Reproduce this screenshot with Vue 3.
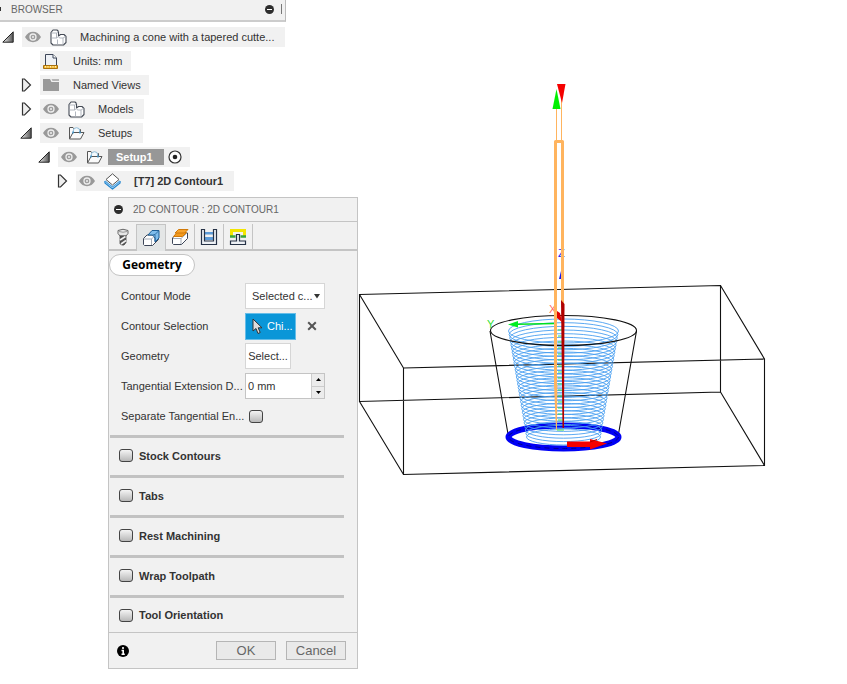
<script setup>
import { computed, ref } from 'vue'

const nodes = [
  { label: 'Machining a cone with a tapered cutte...', level: 0, arrow: 'open', eye: true, icon: 'body', wide: true },
  { label: 'Units: mm', level: 1, arrow: 'none', eye: false, icon: 'units' },
  { label: 'Named Views', level: 1, arrow: 'closed', eye: false, icon: 'folder' },
  { label: 'Models', level: 1, arrow: 'closed', eye: true, icon: 'body' },
  { label: 'Setups', level: 1, arrow: 'open', eye: true, icon: 'setup' },
  { label: 'Setup1', level: 2, arrow: 'open', eye: true, icon: 'setup', selected: true },
  { label: '[T7] 2D Contour1', level: 3, arrow: 'closed', eye: true, icon: 'contour', bold: true }
]

const tabs = ['Tool', 'Geometry', 'Heights', 'Passes', 'Linking']
const activeTab = ref('Geometry')

const sections = ['Stock Contours', 'Tabs', 'Rest Machining', 'Wrap Toolpath', 'Tool Orientation']
const extension = ref('0 mm')

const turns = computed(() => {
  const count = 31
  return Array.from({ length: count }, (_, i) => {
    const t = i / (count - 1)
    return { cy: 331 + 106 * t, rx: 55 - 18 * t, ry: 12 - 4 * t }
  })
})
</script>

<template>
  <main class="workspace">
    <aside class="side">
      <header class="browser-head">
        <span class="nub"></span>
        <h1>BROWSER</h1>
        <button class="minus" aria-label="Collapse browser"></button>
        <span class="grip"></span>
      </header>

      <ul class="tree">
        <li v-for="n in nodes" :key="n.label" :class="['node', 'level-' + n.level]">
          <span class="arrow">
            <svg v-if="n.arrow === 'open'" width="12" height="12" viewBox="0 0 12 12">
              <defs>
                <linearGradient id="wedge"><stop offset="0" stop-color="#eee" /><stop offset="1" stop-color="#555" /></linearGradient>
              </defs>
              <path d="M0.8 11.2H11.2V0.8Z" fill="url(#wedge)" stroke="#222" />
            </svg>
            <svg v-else-if="n.arrow === 'closed'" width="12" height="14" viewBox="0 0 12 14">
              <path d="M2.500 1V13H4.500L10.500 7L4.500 1Z" fill="#eee" stroke="#333" stroke-width="1.2" />
            </svg>
          </span>
          <div :class="['entry', { wide: n.wide, roomy: n.level > 0 && n.eye && !n.selected }]">
            <svg v-if="n.eye" class="eye" width="16" height="12" viewBox="0 0 16 12">
              <path d="M0 6Q3 0.8 8 0.8T16 6Q13 11.2 8 11.2T0 6Z" fill="#999" />
              <circle cx="8" cy="6" r="3" fill="none" stroke="#eee" stroke-width="1.3" />
              <circle cx="8" cy="6" r="1.2" fill="#ddd" />
            </svg>
            <svg class="icon" width="17" height="17" viewBox="0 0 17 17">
              <g v-if="n.icon === 'body'" stroke-linejoin="round">
                <path d="M1 3.500L3 1H7L8.500 2.500V7L10.500 5.500H14L16 7.500V13.500L13.500 16H3L1 14Z" fill="#fff" stroke="#444a55" stroke-width="1.100" />
                <path d="M1.500 9H6.500M6.500 4V9L8.500 7.500M7.500 10.500V15.500M1.500 4H6.500L8.500 2.500M8.500 7.500L9.500 9H13L15.500 7.500M13 9V15.500" fill="none" stroke="#a9afb8" stroke-width=".9" />
              </g>
              <g v-else-if="n.icon === 'units'">
                <path d="M2.500 13V1.500H10L13.500 5V13" fill="#eef1f6" stroke="#3d4658" />
                <path d="M10 1.500V5H13.500" fill="#fff" stroke="#3d4658" />
                <path d="M.500 12.500H14.500V15.500H.500Z" fill="#f2b632" stroke="#a8700d" />
                <path d="M2.500 13V14.500M5 13V14.500M7.500 13V14.500M10 13V14.500M12.500 13V14.500" stroke="#fff1b8" />
              </g>
              <g v-else-if="n.icon === 'folder'" fill="#999">
                <path d="M0 2H7L8.500 5H16V14H0Z" />
                <path d="M8.500 2H16V4H9.500Z" fill="#b5b5b5" />
              </g>
              <g v-else-if="n.icon === 'setup'" fill="none" stroke="#555" stroke-linejoin="round">
                <path d="M1.500 14V2.500H5L6.500 4.500H12.500V7.500" fill="#fafafa" />
                <circle cx="8.500" cy="6" r="3.300" fill="#f4f9fc" stroke="#8fbcd8" />
                <path d="M1.500 14L5 7.500H16L12.500 14Z" fill="#fafafa" />
                <path d="M5 6.500V8.500M12 6.500V8.500" stroke="#3f94cb" stroke-width="1.500" />
              </g>
              <g v-else fill="none" stroke-linejoin="round">
                <path d="M1 8V10L8.500 16L16 10V8" fill="#fff" stroke="#2486cf" stroke-width="1.300" />
                <path d="M1 8L8.500 14L16 8" stroke="#4fa3e0" stroke-width="1.300" />
                <path d="M2 6.500L8.500 .800L15 6.500L8.500 12Z" fill="#fff" stroke="#555" />
              </g>
            </svg>
            <span :class="['label', { selected: n.selected, bold: n.bold }]">{{ n.label }}</span>
            <svg v-if="n.selected" width="14" height="14" viewBox="0 0 14 14">
              <circle cx="7" cy="7" r="6" fill="#fff" stroke="#333" stroke-width="1.2" />
              <circle cx="7" cy="7" r="2.3" fill="#222" />
            </svg>
          </div>
        </li>
      </ul>

      <section class="panel">
        <header class="panel-head">
          <button class="minus" aria-label="Collapse panel"></button>
          <h2>2D CONTOUR : 2D CONTOUR1</h2>
        </header>

        <nav class="tabs">
          <button v-for="t in tabs" :key="t" :class="['tab', { active: t === activeTab }]" :aria-label="t" @click="activeTab = t">
            <svg width="18" height="18" viewBox="0 0 18 18">
              <g v-if="t === 'Tool'" stroke-linejoin="round">
                <path d="M4 2.500Q9 0 14 2.500V5.500L12 8H6L4 5.500Z" fill="#e6e6e6" stroke="#666" />
                <path d="M5 3.500Q9 5 13 3.500" fill="none" stroke="#999" />
                <path d="M6 8H12V14.500L10 17H7.500L6 15.500Z" fill="#555" stroke="#444" stroke-width=".8" />
                <path d="M6 12L11.500 8.500M7 16L12 12.500" stroke="#f0f0f0" stroke-width="1.600" />
              </g>
              <g v-else-if="t === 'Geometry'" stroke-linejoin="round">
                <path d="M1.500 9.500L5 6H11L16.500 3V10.500L10.500 16.500H2.500L1.500 15.500Z" fill="#fff" stroke="#3d4658" />
                <path d="M6 6L10 1.500H17V9L13 13V9L10.500 6Z" fill="#7fbdec" stroke="#1c5e96" />
                <path d="M10.500 6L13 5.500L16.500 2M13 5.500V12" fill="none" stroke="#1c5e96" stroke-width=".8" />
                <path d="M2 10H9.500V16M9.500 10L12 7.500" fill="none" stroke="#a5acb6" />
              </g>
              <g v-else-if="t === 'Heights'" stroke-linejoin="round">
                <path d="M1.500 10L5 6.500L16.500 5V10.500L10.500 16.500H2.500L1.500 15.500Z" fill="#fff" stroke="#3d4658" />
                <path d="M2 10.500H10V16M10 10.500L16 5" fill="none" stroke="#a5acb6" />
                <path d="M2.500 8.500L6 4.500H15.500L11.500 8.500Z" fill="#f39a1e" stroke="#d07908" />
                <path d="M4 5L7.500 1.500H17L13.500 5Z" fill="#f7a42e" stroke="#d07908" />
              </g>
              <g v-else-if="t === 'Passes'">
                <path d="M4.500 4H13.500V6.500H4.500ZM4.500 9H13.500V12H4.500Z" fill="#5c9bd8" />
                <path d="M1.500 1.500H4.500V13H13.500V1.500H16.500V16.500H1.500Z" fill="#eef1f5" stroke="#263246" stroke-width="1.2" />
              </g>
              <g v-else>
                <path d="M2.500 8V2.500H15.500V8" fill="none" stroke="#f3e500" stroke-width="3" />
                <path d="M1 8.500H6.500M11.500 8.500H17" stroke="#38a33d" stroke-width="2.5" />
                <path d="M7.500 6.500H10.500V13H16.500V16.500H1.500V13H7.500Z" fill="#eef1f5" stroke="#263246" stroke-width="1.2" />
              </g>
            </svg>
          </button>
        </nav>

        <div class="panel-body">
          <h3 class="pill">Geometry</h3>
          <div class="fields">
            <div class="field">
              <label for="mode">Contour Mode</label>
              <div class="picker">
                <select id="mode"><option>Selected c...</option></select>
                <svg class="caret" width="6" height="5" viewBox="0 0 6 5"><path d="M0 0H6L3 4.500Z" fill="#333" /></svg>
              </div>
            </div>
            <div class="field">
              <label for="chain">Contour Selection</label>
              <button id="chain" class="chain">
                <svg width="11" height="17" viewBox="0 0 11 17">
                  <path d="M1 1V13L4 10.5L6 15.5L8.2 14.5L6.2 9.8H10Z" fill="#ddd" stroke="#333" />
                </svg>
                Chi...
              </button>
              <button class="clear" aria-label="Clear selection">
                <svg width="10" height="10" viewBox="0 0 10 10"><path d="M1.2 1.2L8.8 8.8M8.8 1.2L1.2 8.8" stroke="#555" stroke-width="2" /></svg>
              </button>
            </div>
            <div class="field">
              <label for="geo">Geometry</label>
              <button id="geo" class="pick">Select...</button>
            </div>
            <div class="field">
              <label for="ext">Tangential Extension D...</label>
              <div class="stepper">
                <input id="ext" v-model="extension" type="text" />
                <div class="steps">
                  <button aria-label="Increase"><svg width="5" height="3" viewBox="0 0 5 3"><path d="M0 3H5L2.5 0Z" /></svg></button>
                  <button aria-label="Decrease"><svg width="5" height="3" viewBox="0 0 5 3"><path d="M0 0H5L2.5 3Z" /></svg></button>
                </div>
              </div>
            </div>
            <div class="field">
              <label for="sep">Separate Tangential En...</label>
              <input id="sep" class="tick inset" type="checkbox" />
            </div>
          </div>

          <label v-for="s in sections" :key="s" class="section">
            <input class="tick" type="checkbox" />
            <span>{{ s }}</span>
          </label>
        </div>

        <footer class="panel-foot">
          <svg width="12" height="12" viewBox="0 0 12 12">
            <circle cx="6" cy="6" r="6" />
            <path d="M6 2V4M4.5 5.5H6.2V9M4.5 9.2H7.8" fill="none" stroke="#fff" stroke-width="1.6" />
          </svg>
          <span class="spacer"></span>
          <button class="action">OK</button>
          <button class="action">Cancel</button>
        </footer>
      </section>
    </aside>

    <svg class="scene" viewBox="358 0 489 684" preserveAspectRatio="xMinYMin meet">
      <g fill="none" stroke="#111" stroke-width="1.1">
        <path d="M359.500 294.500L720.500 285.500V392L359.500 401.500ZM403.500 368L764.500 359V465.500L403.500 474.500ZM359.500 294.500L403.500 368M720.500 285.500L764.500 359M720.500 392L764.500 465.500M359.500 401.500L403.500 474.500" />
        <path d="M490 331L508 434M636.500 331L618.500 434" />
      </g>
      <ellipse cx="563.500" cy="437" rx="55" ry="11.500" fill="none" stroke="#0000f5" stroke-width="6" />
      <ellipse cx="563.500" cy="437" rx="55" ry="11.500" fill="none" stroke="#000070" stroke-width=".8" stroke-dasharray="5 4" />
      <g fill="none" stroke="#4a9ff0" stroke-width=".9">
        <ellipse v-for="(e, i) in turns" :key="i" cx="563.5" :cy="e.cy" :rx="e.rx" :ry="e.ry" />
      </g>
      <ellipse cx="563.5" cy="330.5" rx="73" ry="15" fill="none" stroke="#111" stroke-width="1.1" />

      <path d="M558 330H563M558 336H563M558 342H563M558 348H563M558 354H563M558 360H563M558 366H563M558 372H563M558 378H563M558 384H563M558 390H563M558 396H563M558 402H563M558 408H563M558 414H563M558 420H563M557 430H564" stroke="#3cdf50" />
      <path d="M518 324.300L555 323.500" stroke="#00e020" stroke-width="1.5" />
      <path d="M508 324.500L518 321V327.500Z" fill="#00ee22" />
      <text x="487" y="328" fill="#35e035">Y</text>
      <text x="549" y="313" fill="#ff6b62">X</text>
      <text x="558" y="257" fill="#2222ee">Z</text>
      <path d="M559 279L561 271L564 279Z" fill="#1111ee" />

      <path d="M556.500 100V141M561.500 98V141" stroke="#ffb45e" />
      <path d="M555.500 385V141.500H562.500V305" fill="none" stroke="#ffb45e" stroke-width="3" stroke-linejoin="round" />
      <path d="M554 385H557.300L557 430H556Z" fill="#ffb45e" />
      <path d="M561 300L564.500 304L564 428H562.500Z" fill="#b00000" />
      <path d="M557 311L560 313L562 322L557 318Z" fill="#e00000" />
      <path d="M556.500 89L560.500 109H552.500Z" fill="#00f000" />
      <path d="M557 84H565.500L562 103Z" fill="#f50000" />
      <path d="M567 441.500H590V439L607 443.500L590 449.500V447H567Z" fill="#f50000" />
      <path d="M590 442L597 439.500" stroke="#b00000" />
    </svg>
  </main>
</template>

<style>
body {
  margin: 0;
  background: #fff;
}
</style>

<style scoped>
.workspace {
  display: flex;
  align-items: flex-start;
  font-family: "Liberation Sans", Arial, sans-serif;
  font-size: 11px;
  color: #333;
}
.workspace * {
  box-sizing: border-box;
}
button,
input,
select {
  font: inherit;
  color: inherit;
  margin: 0;
  padding: 0;
}
button {
  border: 0;
  background: none;
}
svg {
  display: block;
  flex: none;
}
.side {
  flex: none;
  width: 358px;
}
.browser-head {
  display: flex;
  align-items: center;
  width: 286px;
  height: 22px;
  padding-right: 1px;
  padding-bottom: 2px;
  background: #f1f1f1;
  border-right: 1px solid #bbb;
  border-bottom: 2px solid #ccc;
}
h1,
h2 {
  margin: 0;
  font-size: 10px;
  font-weight: 400;
  color: #666;
}
.nub {
  width: 1px;
  height: 4px;
  margin-right: 10px;
  background: #333;
}
.minus {
  position: relative;
  flex: none;
  width: 9px;
  height: 9px;
  border-radius: 50%;
  background: #2d2d2d;
}
.minus::after {
  content: "";
  position: absolute;
  inset: 4px 2px;
  background: #fff;
}
.browser-head .minus {
  margin-left: auto;
}
.grip {
  width: 3px;
  height: 10px;
  margin-left: 7px;
  border-left: 1px solid #777;
}
.tree {
  display: flex;
  flex-direction: column;
  gap: 4px;
  margin: 0;
  padding: 5px 0 6px;
  list-style: none;
}
.node {
  display: flex;
  align-items: center;
  height: 20px;
}
.level-0 { padding-left: 2px; }
.level-1 { padding-left: 20px; }
.level-2 { padding-left: 38px; }
.level-3 { padding-left: 56px; }
.arrow {
  flex: none;
  width: 20px;
}
.entry {
  display: flex;
  align-items: center;
  height: 20px;
  padding: 0 8px 0 3px;
  background: #f1f1f1;
}
.wide {
  width: 263px;
}
.roomy {
  padding-right: 11px;
}
.eye {
  margin-right: 9px;
}
.label {
  padding-left: 13px;
  white-space: nowrap;
}
.selected {
  height: 16px;
  margin: 0 4px 0 5px;
  padding: 0 11px 0 8px;
  line-height: 16px;
  font-weight: 700;
  color: #fff;
  background: #979797;
}
.bold {
  font-weight: 700;
}
.panel {
  width: 250px;
  margin-left: 108px;
  background: #f1f1f1;
  border: 1px solid #c4c4c4;
}
.panel-head {
  display: flex;
  align-items: center;
  gap: 10px;
  height: 24px;
  padding-left: 5px;
  border-bottom: 1px solid #c4c4c4;
}
.tabs {
  display: flex;
  height: 29px;
  padding-top: 2px;
  border-bottom: 2px solid #c4c4c4;
}
.tab {
  display: grid;
  place-items: center;
  width: 29px;
  height: 26px;
  border-right: 1px solid #c4c4c4;
}
.tab:first-child {
  width: 28px;
}
.active {
  height: 27px;
  background: #e4e6e6;
  border-top: 1px solid #c4c4c4;
}
.pill {
  width: 86px;
  height: 22px;
  margin: 3px 0 0;
  border: 1px solid #c4c4c4;
  border-radius: 11px;
  background: #fff;
  font: 700 12px/20px "Open Sans", "Noto Sans", sans-serif;
  color: #000;
  text-align: center;
}
.fields {
  padding: 5px 0 4px 12px;
}
.field {
  display: flex;
  align-items: center;
  height: 30px;
}
.field label {
  flex: none;
  width: 124px;
  white-space: nowrap;
}
.picker {
  position: relative;
  width: 80px;
}
.picker select {
  appearance: none;
  width: 80px;
  height: 26px;
  padding-left: 6px;
  border: 1px solid #d6d6d6;
  border-radius: 0;
  background: #fff;
}
.caret {
  position: absolute;
  right: 5px;
  top: 11px;
}
.chain {
  display: flex;
  align-items: center;
  gap: 4px;
  width: 51px;
  height: 27px;
  padding-left: 6px;
  border: 1px solid #66bde8;
  background: #0a96d8;
  color: #fff;
}
.clear {
  margin-left: 11px;
}
.pick {
  width: 46px;
  height: 26px;
  border: 1px solid #d6d6d6;
  background: #fff;
}
.stepper {
  display: flex;
  width: 80px;
  height: 26px;
  border: 1px solid #c4c4c4;
  background: #fff;
}
.stepper input {
  flex: 1;
  min-width: 0;
  padding-left: 2px;
  border: 0;
  background: #fff;
}
.steps {
  display: flex;
  flex-direction: column;
  width: 13px;
  border-left: 1px solid #ccc;
}
.steps button {
  display: grid;
  place-items: center;
  flex: 1;
  background: #ececec;
}
.steps button + button {
  border-top: 1px solid #ccc;
}
.tick {
  appearance: none;
  width: 14px;
  height: 13px;
  border: 1px solid #444;
  border-radius: 3px;
  background: linear-gradient(#f4f4f4, #b8b8b8);
}
.inset {
  margin-left: 4px;
}
.section {
  display: flex;
  align-items: center;
  gap: 6px;
  width: 234px;
  height: 40px;
  margin-left: 1px;
  padding-left: 9px;
  padding-bottom: 2px;
  border-top: 3px solid #c2c2c2;
  font-weight: 700;
}
.section:last-child {
  height: 37px;
  padding-bottom: 0;
}
.panel-foot {
  display: flex;
  align-items: center;
  gap: 10px;
  height: 36px;
  padding: 0 11px 0 8px;
  border-top: 1px solid #c4c4c4;
}
.spacer {
  flex: 1;
}
.action {
  width: 60px;
  height: 19px;
  border: 1px solid #b5b5b5;
  background: #e9e9e9;
  font-size: 13px;
  line-height: 17px;
  color: #666;
}
.scene {
  flex: 1;
  min-width: 0;
  font-size: 11px;
}
</style>
